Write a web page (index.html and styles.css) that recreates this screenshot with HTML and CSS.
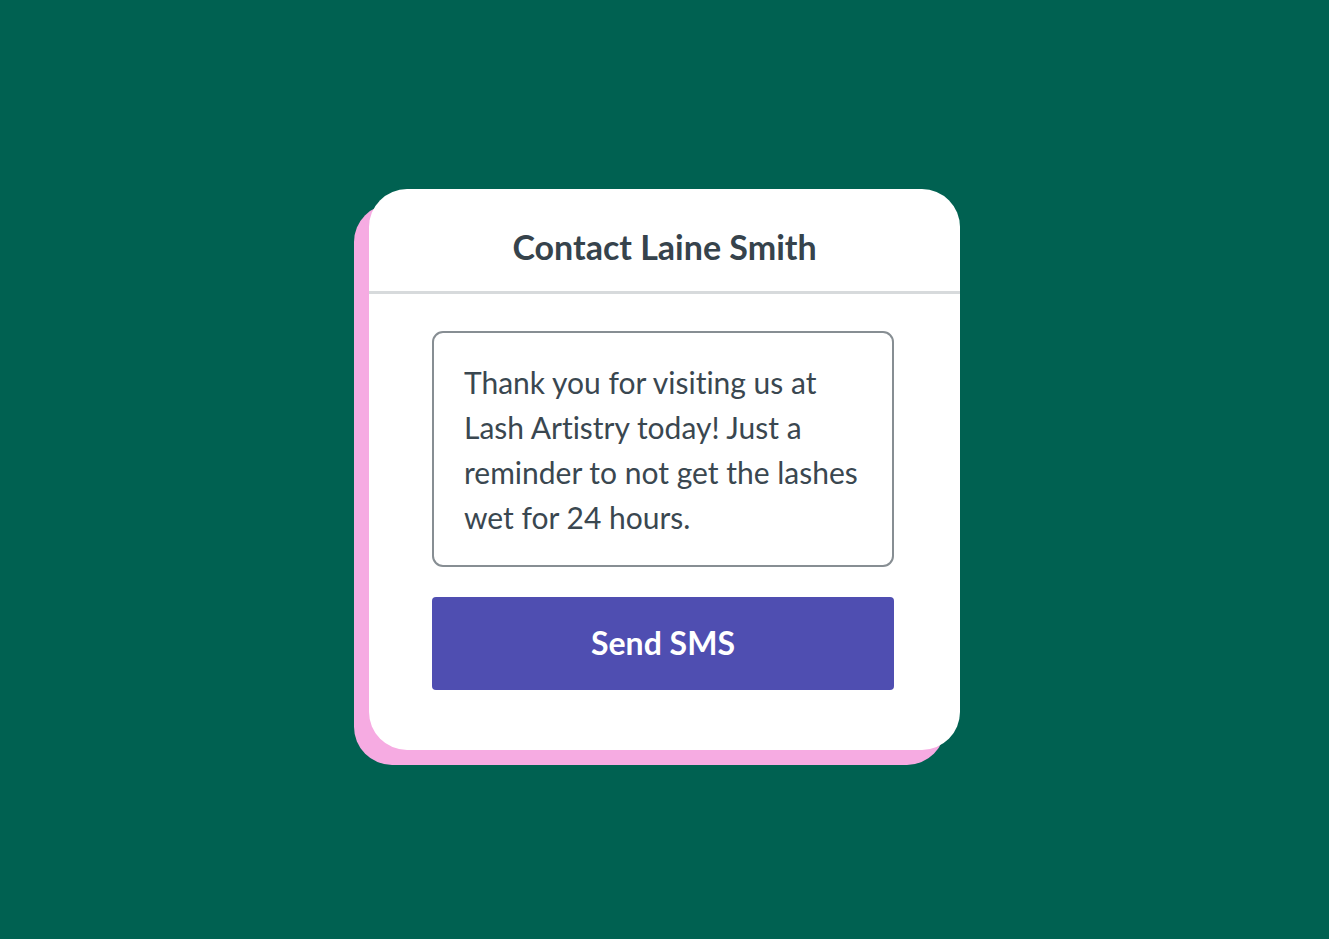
FILE: index.html
```html
<!DOCTYPE html>
<html>
<head>
<meta charset="utf-8">
<link rel="stylesheet" href="styles.css">
</head>
<body>
<div class="stage">
  <div class="card-wrap">
    <div class="card">
      <div class="card-header">
        <h1 class="title">Contact Laine Smith</h1>
      </div>
      <div class="card-body">
        <div class="message">Thank you for visiting us at Lash Artistry today! Just a reminder to not get the lashes wet for 24 hours.</div>
        <button class="send">Send SMS</button>
      </div>
    </div>
  </div>
</div>
</body>
</html>
```
FILE: styles.css
```css
html, body {
  margin: 0;
  padding: 0;
  height: 100%;
}
body {
  background: #006151;
  font-family: Lato, "Open Sans", sans-serif;
  font-variant-ligatures: none;
}
.stage {
  width: 1329px;
  height: 939px;
  padding-top: 189px;
  padding-left: 369px;
  box-sizing: border-box;
}
.card-wrap {
  position: relative;
  width: 591px;
}
.card-wrap::before {
  content: "";
  position: absolute;
  left: -15px;
  top: 15px;
  width: 100%;
  height: 100%;
  background: #f6abe2;
  border-radius: 38px;
}
.card {
  position: relative;
  background: #ffffff;
  border-radius: 38px;
  height: 561px;
  overflow: hidden;
}
.card-header {
  height: 102px;
  border-bottom: 3px solid #d7dadc;
  display: flex;
  align-items: center;
  justify-content: center;
}
.title {
  margin: 0;
  font-size: 34px;
  font-weight: 700;
  color: #36434c;
  padding-top: 12px;
}
.card-body {
  padding: 37px 66px 0 63px;
  display: flex;
  flex-direction: column;
  gap: 30px;
}
.message {
  border: 2px solid #878e93;
  border-radius: 11px;
  height: 236px;
  box-sizing: border-box;
  padding: 27px 20px 0 30px;
  font-size: 30px;
  line-height: 45px;
  color: #3a4750;
}
.send {
  height: 93px;
  border: none;
  border-radius: 4px;
  background: #4f4eb1;
  color: #ffffff;
  font-family: Lato, "Open Sans", sans-serif;
  font-variant-ligatures: none;
  font-size: 32px;
  font-weight: 700;
  padding: 0 0 3px 0;
}
```
